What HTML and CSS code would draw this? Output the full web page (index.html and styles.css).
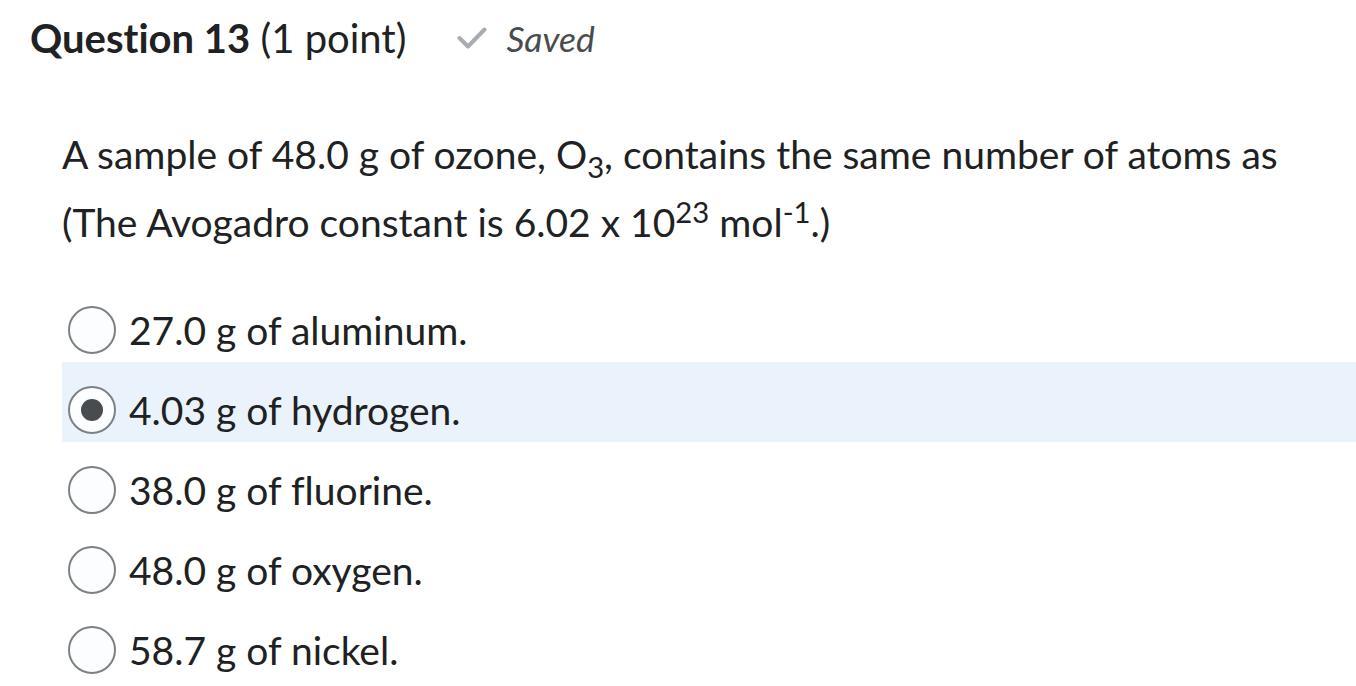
FILE: index.html
```html
<!DOCTYPE html>
<html lang="en">
<head>
    <meta charset="UTF-8">
    <title>Question 13</title>
    <link rel="stylesheet" href="styles.css">
</head>
<body>
    <div class="question-header">
        <h2 class="question-title"><strong>Question 13</strong> (1 point)</h2>
        <span class="saved">
            <svg class="saved-check" viewBox="0 0 30 22" width="30" height="22"><path d="M2.5 11l8.5 8.5L27.5 2.5" fill="none" stroke="#a8acb0" stroke-width="4" stroke-linecap="round" stroke-linejoin="round"/></svg>
            <em>Saved</em>
        </span>
    </div>
    <div class="question-body">
        <p class="question-text">A sample of 48.0 g of ozone, O<sub>3</sub>, contains the same number of atoms as<br>(The Avogadro constant is 6.02 x 10<sup>23</sup> mol<sup>-1</sup>.)</p>
        <ul class="choices">
            <li class="choice"><span class="radio"></span><span class="choice-text">27.0 g of aluminum.</span></li>
            <li class="choice selected"><span class="radio checked"></span><span class="choice-text">4.03 g of hydrogen.</span></li>
            <li class="choice"><span class="radio"></span><span class="choice-text">38.0 g of fluorine.</span></li>
            <li class="choice"><span class="radio"></span><span class="choice-text">48.0 g of oxygen.</span></li>
            <li class="choice"><span class="radio"></span><span class="choice-text">58.7 g of nickel.</span></li>
        </ul>
    </div>
</body>
</html>
```

FILE: styles.css
```css
body {
    margin: 0;
    background: #ffffff;
    color: #202122;
    font-family: Lato, "Open Sans", sans-serif;
    font-variant-ligatures: none;
}

.question-header {
    display: flex;
    align-items: center;
    padding: 12px 0 0 30px;
    height: 52px;
}

.question-title {
    margin: 0;
    font-size: 40px;
    font-weight: normal;
}

.question-title strong {
    font-weight: bold;
}

.saved {
    display: flex;
    align-items: center;
    margin-left: 51px;
    color: #494c4e;
    font-size: 35.5px;
}

.saved-check {
    margin-right: 19px;
}

.question-body {
    padding: 56px 0 0 62px;
}

.question-text {
    margin: 0;
    font-size: 39px;
    line-height: 68px;
}

.question-text sub,
.question-text sup {
    font-size: 0.75em;
    line-height: 0;
}

.choices {
    list-style: none;
    margin: 26px 0 0 0;
    padding: 0;
}

.choice {
    box-sizing: border-box;
    display: flex;
    align-items: center;
    height: 80px;
    padding: 16px 0 0 6px;
    font-size: 39px;
}

.choice.selected {
    background: #eaf2fb;
}

.radio {
    box-sizing: border-box;
    flex: none;
    width: 48px;
    height: 48px;
    border: 2px solid #7c8184;
    border-radius: 50%;
    background: #fcfdff;
    margin-right: 13px;
    display: flex;
    align-items: center;
    justify-content: center;
}

.radio.checked::after {
    content: "";
    width: 22px;
    height: 22px;
    border-radius: 50%;
    background: #494c4e;
}
```
